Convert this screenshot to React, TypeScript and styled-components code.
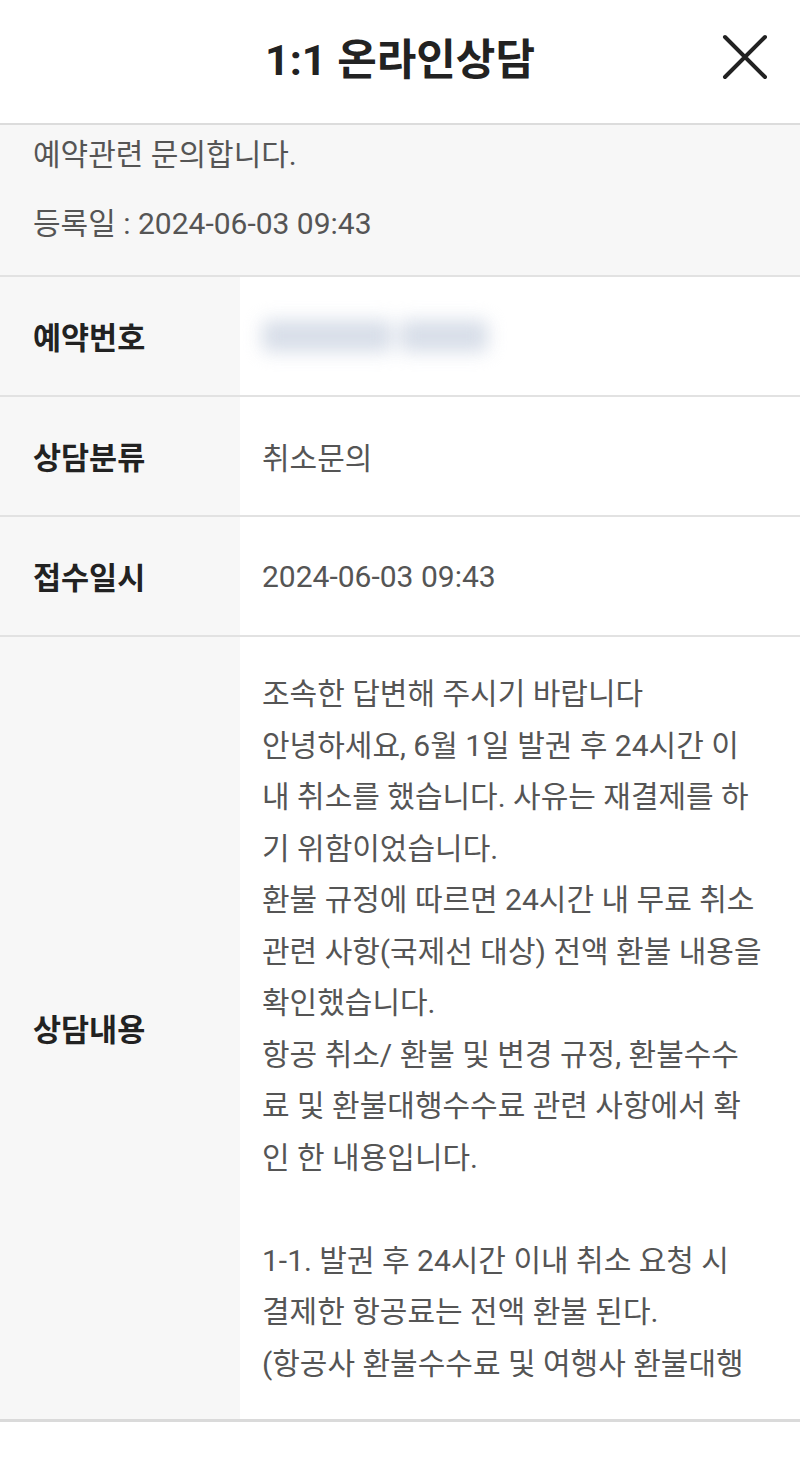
import React from "react";
import styled, { createGlobalStyle } from "styled-components";

const GlobalStyle = createGlobalStyle`
  * { box-sizing: border-box; }
  html, body { margin: 0; padding: 0; background: #ffffff; }
  body {
    font-family: Roboto, "Noto Sans CJK KR", "Noto Sans", sans-serif;
    color: #222;
    -webkit-font-smoothing: antialiased;
  }
`;

const Page = styled.div`
  width: 800px;
  min-height: 1469px;
  background: #fff;
`;

const Header = styled.header`
  height: 125px;
  display: grid;
  grid-template-columns: 1fr auto 1fr;
  align-items: center;
  border-bottom: 2px solid #dcdcdc;
`;

const Title = styled.h1`
  grid-column: 2;
  margin: 0;
  padding-bottom: 12px;
  font-size: 43px;
  font-weight: 700;
  color: #222;
  letter-spacing: 0;
`;

const CloseButton = styled.button`
  grid-column: 3;
  justify-self: end;
  margin-right: 30px;
  margin-bottom: 10px;
  width: 50px;
  height: 50px;
  padding: 0;
  border: none;
  background: transparent;
  display: flex;
  align-items: center;
  justify-content: center;
  cursor: pointer;
`;

const InfoBlock = styled.section`
  background: #f7f7f7;
  padding: 10px 33px 31px;
  display: flex;
  flex-direction: column;
  gap: 29px;
  border-bottom: 2px solid #e2e2e2;
`;

const InfoLine = styled.p`
  margin: 0;
  font-size: 30px;
  line-height: 40px;
  color: #555;
  letter-spacing: 0;
`;

const Table = styled.div`
  display: flex;
  flex-direction: column;
`;

const Row = styled.div<{ $last?: boolean }>`
  display: grid;
  grid-template-columns: 240px 1fr;
  min-height: ${(p) => (p.$last ? "auto" : "120px")};
  border-bottom: ${(p) => (p.$last ? "3px solid #dadada" : "2px solid #e2e2e2")};
`;

const Label = styled.div`
  background: #f7f7f7;
  display: flex;
  align-items: center;
  padding-left: 33px;
  font-size: 30.5px;
  font-weight: 700;
  color: #222;
  letter-spacing: 0;
`;

const Value = styled.div`
  display: flex;
  align-items: center;
  padding: 0 20px 0 22px;
  font-size: 30px;
  color: #555;
  letter-spacing: 0;
`;

const Content = styled.div`
  padding: 31px 10px 30px 22px;
  font-size: 30px;
  line-height: 51.5px;
  color: #555;
  letter-spacing: 0;
`;

const ContentLine = styled.div`
  white-space: nowrap;
  min-height: 51.5px;
`;

const Blurred = styled.div`
  display: flex;
  gap: 8px;
  filter: blur(9px);
  padding: 6px 0;
  opacity: 0.9;
`;

const Blob = styled.span<{ $w: number }>`
  display: block;
  width: ${(p) => p.$w}px;
  height: 32px;
  background: #d3dae6;
  border-radius: 6px;
`;

const contentLines = [
  "조속한 답변해 주시기 바랍니다",
  "안녕하세요, 6월 1일 발권 후 24시간 이",
  "내 취소를 했습니다. 사유는 재결제를 하",
  "기 위함이었습니다.",
  "환불 규정에 따르면 24시간 내 무료 취소",
  "관련 사항(국제선 대상) 전액 환불 내용을",
  "확인했습니다.",
  "항공 취소/ 환불 및 변경 규정, 환불수수",
  "료 및 환불대행수수료 관련 사항에서 확",
  "인 한 내용입니다.",
  "",
  "1-1. 발권 후 24시간 이내 취소 요청 시",
  "결제한 항공료는 전액 환불 된다.",
  "(항공사 환불수수료 및 여행사 환불대행",
];

export default function App() {
  return (
    <Page>
      <GlobalStyle />
      <Header>
        <Title>1:1 온라인상담</Title>
        <CloseButton aria-label="닫기">
          <svg width="46" height="46" viewBox="0 0 46 46" fill="none">
            <path
              d="M3 3 L43 43 M43 3 L3 43"
              stroke="#222"
              strokeWidth="4"
              strokeLinecap="round"
            />
          </svg>
        </CloseButton>
      </Header>
      <InfoBlock>
        <InfoLine>예약관련 문의합니다.</InfoLine>
        <InfoLine>등록일 : 2024-06-03 09:43</InfoLine>
      </InfoBlock>
      <Table>
        <Row>
          <Label>예약번호</Label>
          <Value>
            <Blurred>
              <Blob $w={130} />
              <Blob $w={88} />
            </Blurred>
          </Value>
        </Row>
        <Row>
          <Label>상담분류</Label>
          <Value>취소문의</Value>
        </Row>
        <Row>
          <Label>접수일시</Label>
          <Value>2024-06-03 09:43</Value>
        </Row>
        <Row $last>
          <Label>상담내용</Label>
          <Content>
            {contentLines.map((l, i) => (
              <ContentLine key={i}>{l}</ContentLine>
            ))}
          </Content>
        </Row>
      </Table>
    </Page>
  );
}
